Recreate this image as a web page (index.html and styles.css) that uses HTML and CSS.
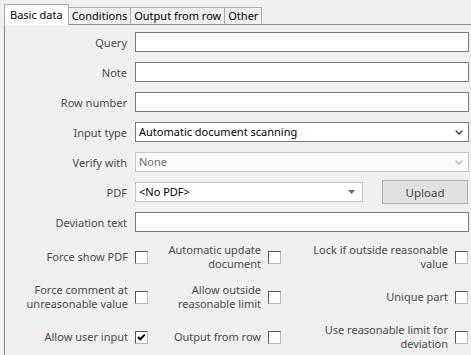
FILE: index.html
```html
<!DOCTYPE html>
<html>
<head>
    <title>Basic data</title>
    <meta charset="UTF-8">
    <link rel="stylesheet" href="styles.css">
</head>
<body>
    <div class="tabs">
        <div class="tab active">Basic data</div>
        <div class="tab">Conditions</div>
        <div class="tab">Output from row</div>
        <div class="tab">Other</div>
    </div>

    <div class="panel">
        <div class="form">
            <div class="lbl">Query</div>
            <div class="field"></div>

            <div class="lbl">Note</div>
            <div class="field"></div>

            <div class="lbl">Row number</div>
            <div class="field"></div>

            <div class="lbl">Input type</div>
            <div class="field select">
                <span>Automatic document scanning</span>
                <svg class="chev" width="8" height="5" viewBox="0 0 8 5"><path d="M0.8 0.8 L4 4 L7.2 0.8" fill="none" stroke="#333" stroke-width="1.3"/></svg>
            </div>

            <div class="lbl">Verify with</div>
            <div class="field select disabled">
                <span>None</span>
                <svg class="chev" width="8" height="5" viewBox="0 0 8 5"><path d="M0.8 0.8 L4 4 L7.2 0.8" fill="none" stroke="#b4b4b4" stroke-width="1.3"/></svg>
            </div>

            <div class="lbl">PDF</div>
            <div class="pdf-row">
                <div class="field combo">
                    <span>&lt;No PDF&gt;</span>
                    <svg class="tri" width="7" height="4" viewBox="0 0 7 4"><polygon points="0,0 7,0 3.5,4" fill="#666"/></svg>
                </div>
                <button class="btn">Upload</button>
            </div>

            <div class="lbl">Deviation text</div>
            <div class="field"></div>
        </div>

        <div class="checks">
            <div class="chk">
                <span>Force show PDF</span>
                <i class="box"></i>
            </div>
            <div class="chk">
                <span>Automatic update<br>document</span>
                <i class="box"></i>
            </div>
            <div class="chk">
                <span>Lock if outside reasonable<br>value</span>
                <i class="box"></i>
            </div>

            <div class="chk">
                <span>Force comment at<br>unreasonable value</span>
                <i class="box"></i>
            </div>
            <div class="chk">
                <span>Allow outside<br>reasonable limit</span>
                <i class="box"></i>
            </div>
            <div class="chk">
                <span>Unique part</span>
                <i class="box"></i>
            </div>

            <div class="chk">
                <span>Allow user input</span>
                <i class="box">
                    <svg width="11" height="11" viewBox="0 0 11 11"><path d="M2 5 L4.2 7.4 L8.8 2.6" fill="none" stroke="#000" stroke-width="2"/></svg>
                </i>
            </div>
            <div class="chk">
                <span>Output from row</span>
                <i class="box"></i>
            </div>
            <div class="chk">
                <span>Use reasonable limit for<br>deviation</span>
                <i class="box"></i>
            </div>
        </div>
    </div>
</body>
</html>
```

FILE: styles.css
```css
body {
    margin: 0;
    background: #f0f0f0;
    font-family: 'Noto Sans', sans-serif;
    font-size: 11px;
    color: #000;
    overflow: hidden;
}

/* tab strip */
.tabs {
    display: flex;
    align-items: flex-end;
    height: 21px;
    padding: 4px 0 0 4px;
}
.tab {
    height: 16px;
    line-height: 16px;
    padding: 0 3px;
    margin-bottom: 1px;
    border: 1px solid #acacac;
    border-bottom: none;
    border-right: none;
    background: #f0f0f0;
}
.tab:last-child {
    border-right: 1px solid #acacac;
}
.tab.active {
    position: relative;
    z-index: 2;
    height: 20px;
    line-height: 19px;
    padding: 0 5px;
    margin-bottom: 0;
    background: #fff;
    border-right: 1px solid #acacac;
}
.tab.active + .tab {
    border-left: none;
}

/* panel */
.panel {
    position: relative;
    margin: -1px 0 0 4px;
    height: 340px;
    border-top: 1px solid #898989;
    border-left: 1px solid #898989;
    padding-top: 7px;
}

.form {
    display: grid;
    grid-template-columns: 122px 334px;
    grid-auto-rows: 20px;
    column-gap: 8px;
    row-gap: 10px;
    align-items: center;
}
.lbl {
    text-align: right;
    color: #4a4a4a;
}
.field {
    box-sizing: border-box;
    height: 20px;
    line-height: 18px;
    padding: 0 3px;
    background: #fff;
    border: 1px solid #7a7a7a;
    display: flex;
    align-items: center;
    justify-content: space-between;
}
.field.select .chev {
    margin-right: 2px;
}
.field.disabled {
    border-color: #c4c4c4;
    color: #6d6d6d;
    background: #fbfbfb;
}
.pdf-row {
    display: flex;
    align-items: center;
}
.field.combo {
    width: 228px;
    border-color: #c4c4c4;
}
.field.combo .tri {
    margin-right: 4px;
}
.btn {
    box-sizing: border-box;
    width: 86px;
    height: 24px;
    margin: -2px 0 -2px 19px;
    padding: 0;
    border: 1px solid #adadad;
    background: #e1e1e1;
    font-family: inherit;
    font-size: 11.5px;
    color: #444;
}

/* check boxes */
.checks {
    display: grid;
    grid-template-columns: 143px 133px 187px;
    grid-auto-rows: 28px;
    row-gap: 12px;
    margin-top: 11px;
}
.chk {
    display: flex;
    justify-content: flex-end;
    align-items: center;
    gap: 7px;
    text-align: right;
    line-height: 14px;
    color: #4a4a4a;
}
.box {
    box-sizing: border-box;
    flex: none;
    width: 13px;
    height: 13px;
    background: #fff;
    border: 1px solid;
    border-color: #555 #b9b9b9 #b9b9b9 #555;
}
.box svg {
    display: block;
}
```
